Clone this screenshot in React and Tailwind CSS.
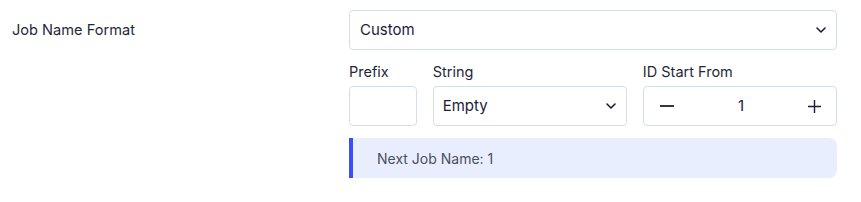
import React from "react";

const Chevron = () => (
  <svg width="12" height="8" viewBox="0 0 12 8" fill="none">
    <path d="M2 2l4 4 4-4" stroke="#1e1b3a" strokeWidth="1.6" strokeLinecap="round" strokeLinejoin="round" />
  </svg>
);

export default function App() {
  const font = { fontFamily: "Inter, 'Noto Sans', sans-serif" };
  return (
    <div className="w-[861px] h-[202px] bg-white flex pt-[10px]" style={font}>
      <div className="w-[349px] pl-[12px] pt-[10px] text-[14.6px] text-[#1f2937] leading-[20px]">
        Job Name Format
      </div>
      <div className="w-[488px] flex flex-col">
        <div className="h-[40px] border border-[#d5dfe8] rounded-[4px] flex items-center justify-between pl-[10px] pr-[9px] text-[15px] text-[#1e1b3a]">
          <span>Custom</span>
          <Chevron />
        </div>
        <div className="flex gap-[16px] mt-[12px]">
          <div className="w-[68px] flex flex-col">
            <div className="text-[14.5px] leading-[20px] text-[#1f2937] mb-[4px]">Prefix</div>
            <div className="h-[40px] border border-[#d5dfe8] rounded-[4px]" />
          </div>
          <div className="w-[195px] flex flex-col">
            <div className="text-[14.5px] leading-[20px] text-[#1f2937] mb-[4px]">String</div>
            <div className="h-[40px] border border-[#d5dfe8] rounded-[4px] flex items-center justify-between pl-[9px] pr-[9px] text-[15px] text-[#1e1b3a]">
              <span>Empty</span>
              <Chevron />
            </div>
          </div>
          <div className="w-[195px] flex flex-col">
            <div className="text-[14.5px] leading-[20px] text-[#1f2937] mb-[4px]">ID Start From</div>
            <div className="h-[40px] border border-[#d5dfe8] rounded-[4px] flex items-center justify-between pl-[15px] pr-[14px] text-[15px] text-[#1e1b3a]">
              <svg width="16" height="16" viewBox="0 0 16 16"><path d="M1 8h14" stroke="#1e1b3a" strokeWidth="1.8" /></svg>
              <span>1</span>
              <svg width="15" height="15" viewBox="0 0 15 15"><path d="M1 7.5h13M7.5 1v13" stroke="#1e1b3a" strokeWidth="1.4" /></svg>
            </div>
          </div>
        </div>
        <div className="mt-[12px] h-[40px] bg-[#e8eefd] border-l-[4px] border-[#3b4ef8] rounded-r-[8px] flex items-center pl-[24px] text-[14px] text-[#4b4f5e]">
          Next Job Name: 1
        </div>
      </div>
    </div>
  );
}
